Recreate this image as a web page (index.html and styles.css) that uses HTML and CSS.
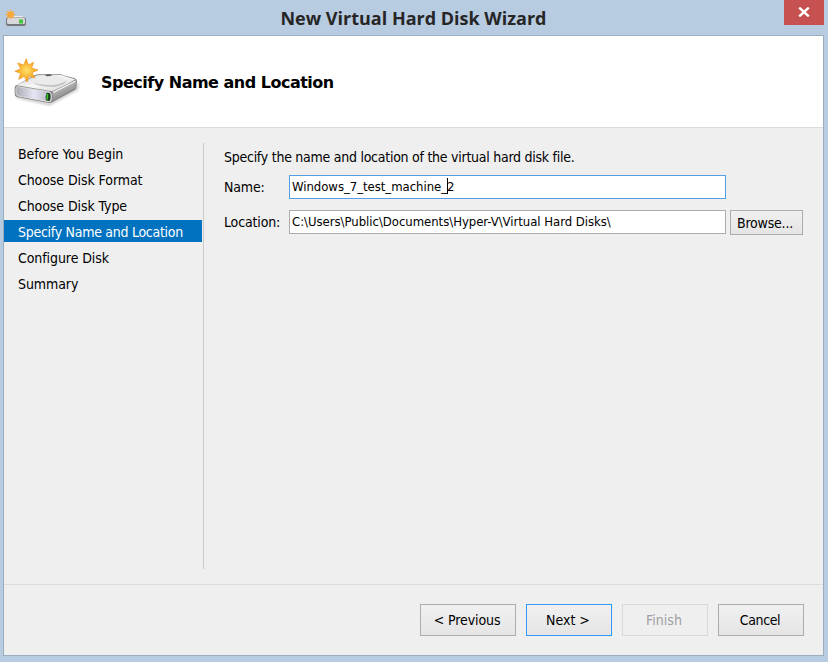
FILE: index.html
```html
<!DOCTYPE html>
<html lang="en">
<head>
    <meta charset="UTF-8">
    <meta name="viewport" content="width=device-width, initial-scale=1.0">
    <title>New Virtual Hard Disk Wizard</title>
    <link rel="stylesheet" href="styles.css">
</head>
<body>
    <div class="window">
        <div class="titlebar">
            <svg class="title-icon" width="22" height="20" viewBox="0 0 22 20">
                <path d="M2 10l3-2h12l3 2z" fill="#ececef"/>
                <rect x="1" y="9.5" width="20" height="8.5" rx="2" fill="#77777b"/>
                <rect x="2" y="10" width="18" height="6" rx="1.5" fill="#d7d7dc"/>
                <rect x="14" y="11.5" width="4" height="4" fill="#43c83c"/>
                <path d="M5.5 1l1 3 3-1.3-1.3 2.8 2.8 1-2.8 1 1.3 3-3-1.3-1 2.8-1-2.8-3 1.3 1.3-3-2.8-1 2.8-1-1.3-2.8 3 1.3z" fill="#f5a83a"/>
            </svg>
            <h1 class="title">New Virtual Hard Disk Wizard</h1>
            <button class="close" aria-label="Close">
                <svg width="12" height="10" viewBox="0 0 12 10">
                    <path d="M1.2 .6L10.8 9.4M10.8 .6L1.2 9.4" stroke="#fff" stroke-width="2.4"/>
                </svg>
            </button>
        </div>

        <div class="frame">
            <div class="header">
                <svg class="disk-icon" width="80" height="60" viewBox="0 0 240 180">
                    <defs>
                        <linearGradient id="top" x1="0" y1="0" x2="1" y2="1">
                            <stop offset="0" stop-color="#c9c9c9"/>
                            <stop offset=".45" stop-color="#f8f8f8"/>
                            <stop offset="1" stop-color="#d4d4d4"/>
                        </linearGradient>
                        <linearGradient id="front" x1="0" y1="0" x2="1" y2="0">
                            <stop offset="0" stop-color="#a9a9b1"/>
                            <stop offset=".5" stop-color="#e6e6f4"/>
                            <stop offset="1" stop-color="#b4b4c0"/>
                        </linearGradient>
                        <linearGradient id="side" x1="0" y1="0" x2=".5" y2="1">
                            <stop offset="0" stop-color="#e4e4e4"/>
                            <stop offset="1" stop-color="#777"/>
                        </linearGradient>
                        <radialGradient id="star">
                            <stop offset="0" stop-color="#ffe06a"/>
                            <stop offset="1" stop-color="#f59b14"/>
                        </radialGradient>
                        <filter id="soft" x="-10%" y="-30%" width="120%" height="160%">
                            <feGaussianBlur stdDeviation="3"/>
                        </filter>
                    </defs>
                    <path d="M34 138L134 160L216 115L218 98" fill="none" stroke="#888" stroke-width="6" opacity=".5" filter="url(#soft)"/>
                    <path d="M31 104L88 73Q94 70 102 70L166 70Q174 71 180 74L208 81Q216 84 216 90L214 110Q213 115 208 118L142 154Q137 157 131 156L36 138Q29 136 29 128V111Q29 106 31 104Z" fill="#858585"/>
                    <path d="M34 103L90 75Q96 72 102 72L166 72Q173 72 179 76L211 85Q196 96 142 121Q134 120 34 103Z" fill="url(#top)"/>
                    <path d="M80 93Q76 84 96 77Q129 69 166 78Q189 84 182 93Q175 103 146 108Q102 106 80 93Z" fill="#ebebeb"/>
                    <path d="M80 94Q103 103 143 102Q170 101 185 88Q182 102 151 107Q102 109 80 94Z" fill="#c0c1c2"/>
                    <path d="M119 71L134 70L142 74L125 76Z" fill="#565656"/>
                    <path d="M143 123L213 88L211 111L142 151Z" fill="url(#side)"/>
                    <path d="M145 124L212 90" stroke="#f2f2f2" stroke-width="4"/>
                    <path d="M38 107L131 122Q139 124 139 131V146Q139 153 130 152L40 135Q33 133 33 127V112Q33 107 38 107Z" fill="url(#front)" stroke="#f4f4f4" stroke-width="2"/>
                    <path d="M125 125L135 127Q139 141 133 150L123 148Q120 137 125 125Z" fill="#163c17"/>
                    <path d="M125 128L130 129L129 146L124 145Z" fill="#43bc2f"/>
                    <path d="M64 23L70 42L86 34L80 51L99 57L81 65L90 81L72 75L66 93L58 76L41 85L47 67L30 61L47 53L38 36L56 42Z" fill="url(#star)" stroke="#ee9420" stroke-width="2" stroke-linejoin="round"/>
                </svg>
                <h2 class="heading">Specify Name and Location</h2>
            </div>

            <div class="content">
                <ul class="steps">
                    <li>Before You Begin</li>
                    <li>Choose Disk Format</li>
                    <li>Choose Disk Type</li>
                    <li class="active">Specify Name and Location</li>
                    <li>Configure Disk</li>
                    <li>Summary</li>
                </ul>
                <div class="form">
                    <p class="intro">Specify the name and location of the virtual hard disk file.</p>
                    <div class="row">
                        <div class="label">Name:</div>
                        <div class="field focused">Windows_7_test_machine_<span class="caret"></span>2</div>
                    </div>
                    <div class="row">
                        <div class="label">Location:</div>
                        <div class="field">C:\Users\Public\Documents\Hyper-V\Virtual Hard Disks\</div>
                        <button class="btn browse">Browse...</button>
                    </div>
                </div>
            </div>

            <div class="footer">
                <button class="btn previous">&lt; Previous</button>
                <button class="btn next">Next &gt;</button>
                <button class="btn" disabled>Finish</button>
                <button class="btn cancel">Cancel</button>
            </div>
        </div>
    </div>
</body>
</html>
```
FILE: styles.css
```css
* {
    box-sizing: border-box;
}
body {
    margin: 0;
    font-family: "DejaVu Sans Condensed", "DejaVu Sans", sans-serif;
    font-size: 14px;
    color: #000;
}
.window {
    display: flex;
    flex-direction: column;
    height: 662px;
    padding: 0 4px 6px 3px;
    background: #b7cbe1;
}
.titlebar {
    display: flex;
    align-items: flex-start;
    height: 35px;
}
.title-icon {
    margin: 8px 0 0 2px;
}
.title {
    flex: 1;
    margin: 0;
    padding: 5px 0 0 16px;
    font: bold 18px/26px "Open Sans", "Noto Sans", sans-serif;
    text-align: center;
    color: #262626;
}
.close {
    display: flex;
    justify-content: center;
    align-items: center;
    width: 40px;
    height: 25px;
    padding: 0 0 2px;
    border: none;
    background: #c75050;
}
.frame {
    display: flex;
    flex: 1;
    flex-direction: column;
    border: 1px solid #9baebf;
    background: #efefef;
}
.header {
    display: flex;
    align-items: center;
    height: 92px;
    padding-left: 1px;
    border-bottom: 1px solid #dcdcdc;
    background: #fff;
}
.disk-icon {
    margin-top: -2px;
}
.heading {
    margin: 2px 0 0 16px;
    font: bold 16px/20px "DejaVu Sans", sans-serif;
    letter-spacing: -0.5px;
}
.content {
    display: flex;
    flex: 1;
    padding-top: 15px;
}
.steps {
    display: flex;
    flex-direction: column;
    gap: 4px;
    width: 200px;
    height: 426px;
    margin: 0;
    padding: 0 1px 0 0;
    border-right: 1px solid #cacaca;
    list-style: none;
}
.steps li {
    height: 22px;
    padding-left: 14px;
    line-height: 24px;
    letter-spacing: -0.08px;
}
.steps li:first-child {
    margin-top: -1px;
}
.steps .active {
    background: #0072c0;
    color: #fff;
    letter-spacing: -0.28px;
}
.form {
    flex: 1;
    padding: 4px 0 0 20px;
}
.intro {
    margin: 0 0 8px;
    line-height: 20px;
    letter-spacing: -0.26px;
}
.row {
    display: flex;
    height: 25px;
    margin-bottom: 10px;
}
.label {
    width: 65px;
    line-height: 24px;
    letter-spacing: -0.15px;
}
.field {
    width: 437px;
    height: 24px;
    padding-left: 2px;
    border: 1px solid #ababb0;
    background: #fff;
    font-size: 13px;
    line-height: 21px;
    letter-spacing: -0.03px;
}
.focused {
    border-color: #569de5;
}
.caret {
    display: inline-block;
    width: 1px;
    height: 16px;
    margin-right: -1px;
    background: #000;
    vertical-align: -3px;
}
.btn {
    width: 86px;
    height: 32px;
    padding: 0 2px 0 0;
    border: 1px solid #acacac;
    background: linear-gradient(#f0f0f0, #e5e5e5);
    font: inherit;
    color: #000;
}
.btn:disabled {
    border-color: #d9d9d9;
    background: #efefef;
    color: #a0a0a5;
}
.browse {
    width: 73px;
    height: 25px;
    margin-left: 4px;
    padding-right: 3px;
    letter-spacing: -0.2px;
}
.footer {
    display: flex;
    justify-content: flex-end;
    gap: 10px;
    height: 71px;
    padding: 19px 19px 0 0;
    border-top: 1px solid #dcdcdc;
}
.previous {
    width: 96px;
    letter-spacing: -0.1px;
}
.next {
    border-color: #3399ff;
}
.cancel {
    letter-spacing: -0.4px;
}
```
